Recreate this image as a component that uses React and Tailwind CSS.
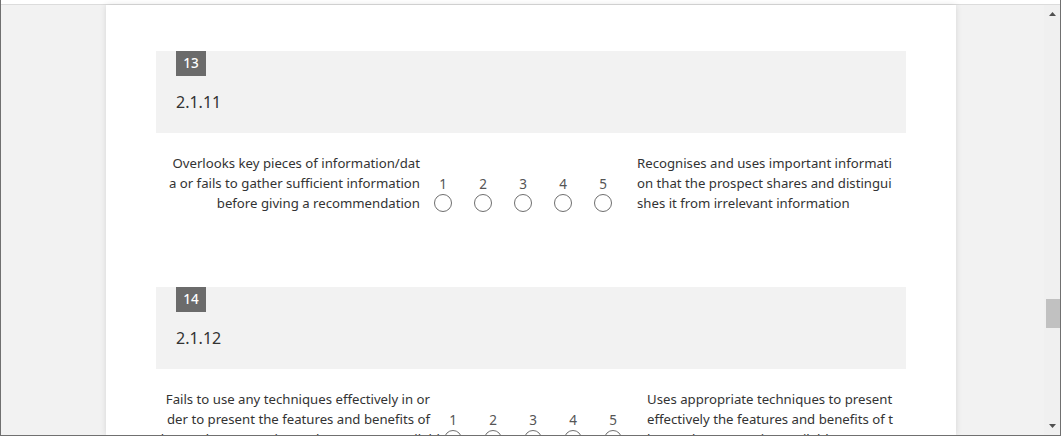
import React from 'react';

const items = [
    {
        no: 13,
        title: '2.1.11',
        left: ['Overlooks key pieces of information/dat', 'a or fails to gather sufficient information', 'before giving a recommendation'],
        right: ['Recognises and uses important informati', 'on that the prospect shares and distingui', 'shes it from irrelevant information'],
        leftW: 'w-[267px]',
    },
    {
        no: 14,
        title: '2.1.12',
        left: ['Fails to use any techniques effectively in or', 'der to present the features and benefits of', 'the product or service to the prospect available'],
        right: ['Uses appropriate techniques to present', 'effectively the features and benefits of t', 'he product or service available'],
        leftW: 'w-[277px]',
    },
];

const Rating = ({ item }) => (
    <div className="flex items-end pt-5 text-[13.2px] leading-5 text-[#333333]">
        <div className={`${item.leftW} shrink-0 text-right pr-[3px]`}>
            {item.left.map((l, i) => <div key={i} className="whitespace-nowrap">{l}</div>)}
        </div>
        <div className="flex shrink-0">
            {[1, 2, 3, 4, 5].map(n => (
                <div key={n} className="w-10 flex flex-col items-center">
                    <span className="text-[13.5px] leading-5 text-[#555555]">{n}</span>
                    <span className="w-[18px] h-[18px] mb-px rounded-full border border-[#6e6e6e] bg-white" />
                </div>
            ))}
        </div>
        <div className="ml-[14px] self-start">
            {item.right.map((l, i) => <div key={i} className="whitespace-nowrap">{l}</div>)}
        </div>
    </div>
);

const Question = ({ item }) => (
    <div className="mb-[74px]">
        <div className="bg-[#f2f2f2] pl-5 pb-[19px]">
            <div className="w-[30px] h-[25px] bg-[#6b6b6b] text-white text-[13.5px] font-medium flex items-center justify-center">
                {item.no}
            </div>
            <div className="mt-[14px] text-[16px] leading-6 text-[#333333]">{item.title}</div>
        </div>
        <Rating item={item} />
    </div>
);

const App = () => {
    return (
        <div className="w-[1061px] h-[436px] overflow-hidden flex flex-col border border-[#707070] border-t-0 bg-white" style={{ fontFamily: '"Segoe UI", "Noto Sans", sans-serif' }}>
            <div className="h-[5px] bg-white border-b border-[#dcdcdc] shrink-0" />
            <div className="flex flex-1 min-h-0 bg-[#f2f2f2]">
                <div className="flex flex-1 min-w-0 pl-[105px] pr-[87px]">
                    <div className="w-[850px] bg-white shadow-[0_0_6px_rgba(0,0,0,0.12)] px-[50px] pt-[46px] overflow-hidden">
                        {items.map(item => <Question key={item.no} item={item} />)}
                    </div>
                </div>
                <div className="w-[16px] shrink-0 flex flex-col items-center bg-[#f0f0f0] pt-[7px] pb-[7px]">
                    <svg width="7" height="4" viewBox="0 0 7 4"><polygon points="3.5,0 7,4 0,4" fill="#505050" /></svg>
                    <div className="flex-1 w-full relative">
                        <div className="absolute left-[2px] right-0 top-[283px] h-[29px] bg-[#c1c1c1]" />
                    </div>
                    <svg width="7" height="4" viewBox="0 0 7 4"><polygon points="0,0 7,0 3.5,4" fill="#505050" /></svg>
                </div>
            </div>
        </div>
    );
};

export default App;
